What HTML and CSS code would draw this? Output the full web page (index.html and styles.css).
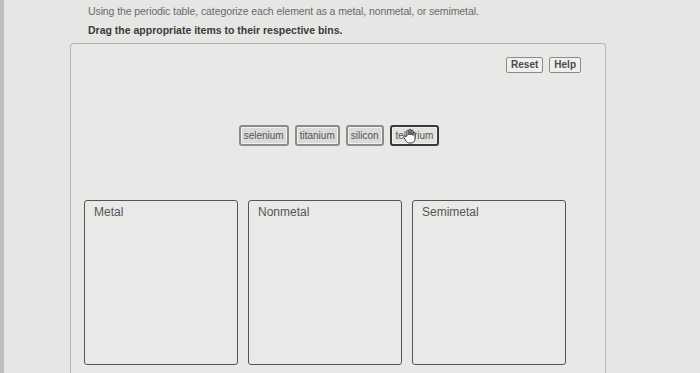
FILE: index.html
```html
<!DOCTYPE html>
<html>
<head>
<meta charset="utf-8">
<link rel="stylesheet" href="styles.css">
</head>
<body>
<div class="page">
  <p class="intro">Using the periodic table, categorize each element as a metal, nonmetal, or semimetal.</p>
  <p class="task">Drag the appropriate items to their respective bins.</p>
  <div class="board">
    <div class="tools">
      <button class="btn">Reset</button>
      <button class="btn">Help</button>
    </div>
    <div class="chips">
      <span class="chip">selenium</span>
      <span class="chip">titanium</span>
      <span class="chip">silicon</span>
      <span class="chip chip-active">tellurium
        <svg class="cursor" width="13" height="15" viewBox="0 0 13 15">
          <path d="M4 7 V2.2 a1 1 0 0 1 2 0 V6 V1.4 a1 1 0 0 1 2 0 V6 V2 a1 1 0 0 1 2 0 V6.5 V4 a1 1 0 0 1 2 0 V9.5 c0 2.6 -1.6 4.5 -4 4.5 h-1.5 c-1.8 0 -2.8 -1 -3.7 -2.4 L1 8.6 a1 1 0 0 1 1.6 -1.2 Z" fill="#fff" stroke="#222" stroke-width="0.9" stroke-linejoin="round"/>
        </svg>
      </span>
    </div>
    <div class="bins">
      <div class="bin">Metal</div>
      <div class="bin">Nonmetal</div>
      <div class="bin">Semimetal</div>
    </div>
  </div>
</div>
</body>
</html>
```

FILE: styles.css
```css
html, body {
  margin: 0;
  padding: 0;
}
body {
  background: #e6e6e4;
  font-family: "Liberation Sans", Arial, sans-serif;
  width: 700px;
  height: 373px;
  overflow: hidden;
}
.page {
  padding: 4px 0 0 66px;
  border-left: 4px solid #bdbdbb;
  box-sizing: border-box;
  height: 373px;
}
.intro {
  margin: 0 0 0 18px;
  font-size: 10.5px;
  line-height: 14px;
  color: #6a6a6a;
  letter-spacing: -0.1px;
}
.task {
  margin: 5px 0 0 18px;
  font-size: 10.5px;
  line-height: 14px;
  font-weight: bold;
  color: #3a3a3a;
}
.board {
  margin-top: 6px;
  width: 536px;
  height: 330px;
  border: 1px solid #b4b4b2;
  border-bottom: none;
  border-radius: 4px 4px 0 0;
  box-sizing: border-box;
  background: #e8e8e6;
}
.tools {
  display: flex;
  justify-content: flex-end;
  gap: 6px;
  padding: 13px 24px 0 0;
}
.btn {
  font-family: "Liberation Sans", Arial, sans-serif;
  font-weight: bold;
  font-size: 10px;
  color: #4a4a4a;
  background: #efefed;
  border: 1px solid #8a8a8a;
  border-radius: 2px;
  height: 16px;
  padding: 0 4px;
  line-height: 14px;
}
.chips {
  display: flex;
  justify-content: center;
  gap: 6px;
  margin-top: 52px;
  padding-left: 2px;
}
.chip {
  position: relative;
  font-size: 10px;
  color: #555;
  background: #dadad8;
  border: 2px solid #8c8c8a;
  border-radius: 3px;
  height: 21px;
  box-sizing: border-box;
  line-height: 17px;
  padding: 0 3px;
  box-shadow: inset 0 0 0 1px #f0f0ee;
}
.chip-active {
  border-color: #3a3a3a;
  background: #e2e2e0;
  padding: 0 4px;
}
.cursor {
  position: absolute;
  left: 11px;
  top: 2px;
}
.bins {
  display: flex;
  gap: 10px;
  margin-top: 54px;
  padding-left: 13px;
}
.bin {
  width: 154px;
  height: 165px;
  box-sizing: border-box;
  border: 1.5px solid #555;
  border-radius: 3px;
  padding: 3px 9px;
  font-size: 12px;
  line-height: 16px;
  color: #555;
  background: #e9e9e7;
}
```
